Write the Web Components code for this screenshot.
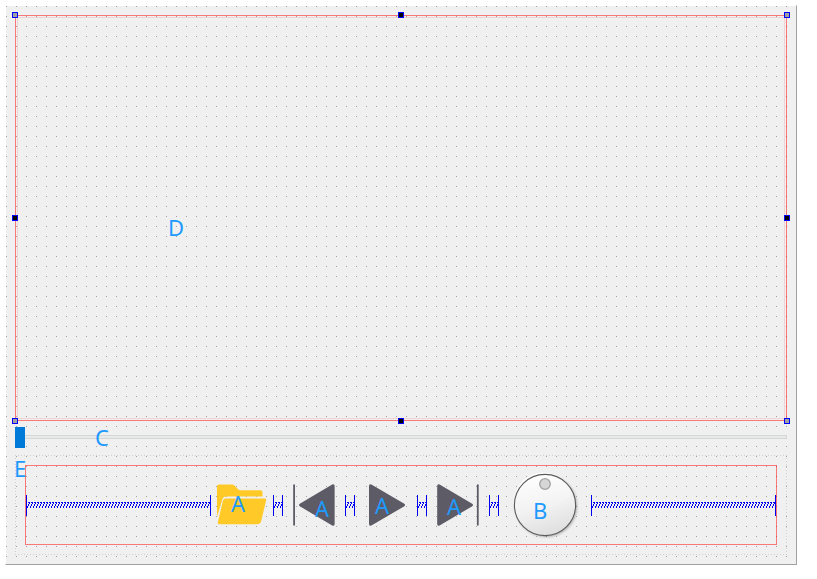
<!DOCTYPE html>
<html lang="en">
<head>
<meta charset="utf-8">
<title>Player form</title>
<style>
body { margin: 0; background: #fff; font-family: "Noto Sans", sans-serif; }
</style>
</head>
<body>
<form-canvas>
    <video-area><note-label style="left:152px;top:196px">D</note-label></video-area>
    <seek-slider><note-label style="left:80px;top:-5px">C</note-label></seek-slider>
    <control-bar>
        <note-label slot="note" style="left:-1px;top:-2px">E</note-label>
        <h-spring grow></h-spring>
        <tool-button icon="folder"><note-label style="left:14px;top:8px">A</note-label></tool-button>
        <h-spring></h-spring>
        <tool-button icon="prev"><note-label style="left:26px;top:13px">A</note-label></tool-button>
        <h-spring></h-spring>
        <tool-button icon="play"><note-label style="left:14px;top:10px">A</note-label></tool-button>
        <h-spring></h-spring>
        <tool-button icon="next"><note-label style="left:14px;top:11px">A</note-label></tool-button>
        <h-spring></h-spring>
        <volume-dial><note-label style="left:28px;top:29px">B</note-label></volume-dial>
        <h-spring grow></h-spring>
    </control-bar>
</form-canvas>

<script>
'use strict';

// every element clones its markup into an open shadow root
function define(name, html, ready){
    const template = document.createElement('template');
    template.innerHTML = html;
    class El extends HTMLElement{
        constructor(){
            super();
            this.attachShadow({mode:'open'});
            this.shadowRoot.appendChild(template.content.cloneNode(true));
        }
        connectedCallback(){
            if(ready) ready(this);
        }
    }
    window.customElements.define(name, El);
}

define('form-canvas', `<style>
:host{
    display:flex; flex-direction:column; box-sizing:border-box;
    width:792px; height:560px; margin:5px 0 0 5px; padding:9px;
    border:1px solid; border-color:#fff #a0a0a0 #a0a0a0 #fff;
    background:conic-gradient(from 270deg at 1px 1px,#a0a0a0 90deg,transparent 0) 0 0/10px 10px padding-box,#f0f0f0;
}
</style><slot></slot>`);

// selected widget: outline with a handle on each corner and edge
define('video-area', `<style>
:host{
    display:block; position:relative; box-sizing:border-box; height:406px;
    border:1px solid rgba(255,0,0,.5);
}
.inner{ box-sizing:border-box; height:402px; margin:1px; border:1px solid rgba(255,0,0,.12); }
i{
    position:absolute; box-sizing:border-box; width:6px; height:6px;
    border:1px solid #0000ff; background:#000;
}
.corner{ background:#a0a0a0; }
.l{left:-4px} .c{left:382px} .r{left:768px}
.t{top:-4px} .m{top:199px} .b{top:402px}
</style>
<div class="inner"></div>
<i class="corner l t"></i><i class="c t"></i><i class="corner r t"></i>
<i class="l m"></i><i class="r m"></i>
<i class="corner l b"></i><i class="c b"></i><i class="corner r b"></i>
<slot></slot>`);

define('seek-slider', `<style>
:host{ display:flex; align-items:center; position:relative; height:21px; margin-top:6px; }
.handle{ width:10px; height:21px; background:#007ad9; }
.groove{ flex:1; box-sizing:border-box; height:4px; margin-bottom:1px; border:1px solid #d6d6d6; border-left:0; background:#e7eaea; }
</style><div class="handle"></div><div class="groove"></div><slot></slot>`);

define('control-bar', `<style>
:host{
    --dots-h:repeating-linear-gradient(90deg,#d0d0d0 0 1px,transparent 1px 3px);
    --dots-v:repeating-linear-gradient(#d0d0d0 0 1px,transparent 1px 3px);
    display:block; position:relative; box-sizing:border-box;
    width:772px; height:100px; margin-top:7px; padding:10px;
    background:
        var(--dots-h) 0 0/100% 1px no-repeat, var(--dots-h) 0 100%/100% 1px no-repeat,
        var(--dots-v) 0 0/1px 100% no-repeat, var(--dots-v) 100% 0/1px 100% no-repeat;
}
.row{
    display:flex; align-items:center; gap:6px; box-sizing:border-box;
    height:80px; border:1px solid rgba(255,0,0,.5);
}
</style><div class="row"><slot></slot></div><slot name="note"></slot>`);

define('h-spring', `<style>
:host{
    display:flex; align-items:center; box-sizing:border-box; flex:none;
    width:10px; height:21px; margin-top:1px;
    border:solid #0000f0; border-width:0 1px;
}
:host([grow]){ flex:1; }
svg{ display:block; width:100%; height:6px; margin-bottom:1px; }
</style>
<svg shape-rendering="crispEdges">
    <defs><pattern id="coil" width="3" height="6" patternUnits="userSpaceOnUse">
        <path fill="#0000f0" d="M1 0h2v1h-2zM2 1h1v1h-1zM1 2h1v2h-1zM0 4h1v2h-1z"/>
    </pattern></defs>
    <rect width="100%" height="6" fill="url(#coil)"/>
</svg>`);

const ICONS = {
    folder: `<g fill="#ffca28">
        <path d="M2 4.5h13q1.5 0 2.5 1l3.5 3.7q1 1.1 2.5 1.1h20q2 0 2 2v4.2H9.5q-3.3 0-4.2 3.1L0 37V6.5q0-2 2-2z"/>
        <path d="M8.5 18.6h39.2q1.9 0 1.4 1.9l-5 21q-.8 2.8-3.8 2.8H2.5q-2.2 0-1.6-2.2l5-21.3q.7-2.2 2.6-2.2z"/></g>`,
    prev: `<path fill="#5d5b66" d="M4.2 5.2q0-1 .9-1t.9 1v39.6q0 1-.9 1t-.9-1z"/>
        <path fill="#5d5b66" d="M43.2 4.5q2.4-1 2.4 1.4v38.2q0 2.4-2.4 1.4L11.2 26.5q-2.5-1.5 0-3z"/>`,
    play: `<path fill="#5d5b66" d="M10.4 4.5q-2.4-1-2.4 1.4v38.2q0 2.4 2.4 1.4L42.9 26.5q2.5-1.5 0-3z"/>`,
    next: `<path fill="#5d5b66" d="M6.6 4.5q-2.4-1-2.4 1.4v38.2q0 2.4 2.4 1.4L38.8 26.5q2.5-1.5 0-3z"/>
        <path fill="#5d5b66" d="M43.9 5.2q0-1 .9-1t.9 1v39.6q0 1-.9 1t-.9-1z"/>`
};

define('tool-button', `<style>
:host{ display:block; position:relative; flex:none; width:50px; height:50px; }
svg{ display:block; }
</style><svg width="50" height="50" viewBox="0 0 50 50"></svg><slot></slot>`,
el => { el.shadowRoot.querySelector('svg').innerHTML = ICONS[el.getAttribute('icon')]; });

define('volume-dial', `<style>
:host{ display:block; position:relative; flex:none; width:80px; height:78px; }
svg{ display:block; }
</style>
<svg width="80" height="78">
    <defs>
        <linearGradient id="face" x1=".3" y1="0" x2=".6" y2="1">
            <stop offset="0" stop-color="#fff"/><stop offset=".5" stop-color="#f3f3f3"/><stop offset="1" stop-color="#dedede"/>
        </linearGradient>
        <linearGradient id="gloss" x1=".3" y1="0" x2=".6" y2="1">
            <stop offset="0" stop-color="#fff"/><stop offset="1" stop-color="#f0f0f0"/>
        </linearGradient>
        <filter id="soft"><feGaussianBlur stdDeviation="1.2"/></filter>
    </defs>
    <circle cx="41.2" cy="40.2" r="31" fill="#000" opacity=".25" filter="url(#soft)"/>
    <circle cx="40" cy="39" r="30.7" fill="url(#face)"/>
    <path d="M10 46.5A30.2 30.2 0 1 1 67.5 27Q53 46 10 46.5z" fill="url(#gloss)"/>
    <circle cx="40" cy="39" r="30.6" fill="none" stroke="#5c5c5c" stroke-width="1.1"/>
    <circle cx="40" cy="18" r="5.3" fill="#d6d6d6" stroke="#a2a2a2" stroke-width="1.3"/>
</svg><slot></slot>`);

define('note-label', `<style>
:host{
    display:block; position:absolute; z-index:1;
    font-size:22px; line-height:30px; color:#1e9aff;
}
</style><slot></slot>`);
</script>
</body>
</html>
